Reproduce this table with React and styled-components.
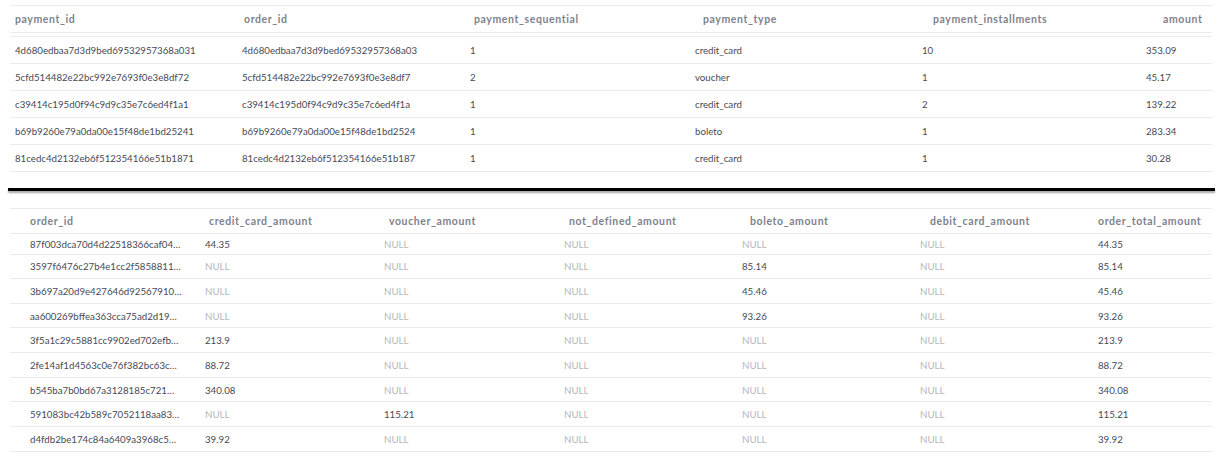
import styled, { createGlobalStyle } from 'styled-components';

const GlobalStyle = createGlobalStyle`
  *, *::before, *::after {
    box-sizing: border-box;
  }
  body {
    margin: 0;
    background: #ffffff;
    font-family: Lato, "Open Sans", sans-serif;
  }
`;

const payments = [
  ['4d680edbaa7d3d9bed69532957368a031', '4d680edbaa7d3d9bed69532957368a03', '1', 'credit_card', '10', '353.09'],
  ['5cfd514482e22bc992e7693f0e3e8df72', '5cfd514482e22bc992e7693f0e3e8df7', '2', 'voucher', '1', '45.17'],
  ['c39414c195d0f94c9d9c35e7c6ed4f1a1', 'c39414c195d0f94c9d9c35e7c6ed4f1a', '1', 'credit_card', '2', '139.22'],
  ['b69b9260e79a0da00e15f48de1bd25241', 'b69b9260e79a0da00e15f48de1bd2524', '1', 'boleto', '1', '283.34'],
  ['81cedc4d2132eb6f512354166e51b1871', '81cedc4d2132eb6f512354166e51b187', '1', 'credit_card', '1', '30.28']
];

const paymentHeaders = [
  ['payment_id', 0],
  ['order_id', 2],
  ['payment_sequential', 4],
  ['payment_type', 8],
  ['payment_installments', 11],
  ['amount', 17]
];

const totalsHeaders = [
  ['order_id', 0],
  ['credit_card_amount', 4],
  ['voucher_amount', 5],
  ['not_defined_amount', 5],
  ['boleto_amount', 8],
  ['debit_card_amount', 10],
  ['order_total_amount', 0]
];

const N = null;
const totals = [
  ['87f003dca70d4d22518366caf04…', '44.35', N, N, N, N, '44.35'],
  ['3597f6476c27b4e1cc2f5858811…', N, N, N, '85.14', N, '85.14'],
  ['3b697a20d9e427646d92567910…', N, N, N, '45.46', N, '45.46'],
  ['aa600269bffea363cca75ad2d19…', N, N, N, '93.26', N, '93.26'],
  ['3f5a1c29c5881cc9902ed702efb…', '213.9', N, N, N, N, '213.9'],
  ['2fe14af1d4563c0e76f382bc63c…', '88.72', N, N, N, N, '88.72'],
  ['b545ba7b0bd67a3128185c721…', '340.08', N, N, N, N, '340.08'],
  ['591083bc42b589c7052118aa83…', N, '115.21', N, N, N, '115.21'],
  ['d4fdb2be174c84a6409a3968c5…', '39.92', N, N, N, N, '39.92']
];

const TOP_COLS = '227px 228px 225px 227px 224px 1fr';
const BOTTOM_COLS = '175px 179px 180px 178px 178px 178px 1fr';

export default function App() {
  return (
    <>
      <GlobalStyle />
      <Page>
        <Table>
          <HeaderRow $cols={TOP_COLS} $height={27}>
            {paymentHeaders.map(([name, shift]) => (
              <HeadCell key={name} $shift={shift}>{name}</HeadCell>
            ))}
          </HeaderRow>
          <Body $double>
            {payments.map((row) => (
              <Row key={row[0]} $cols={TOP_COLS} $height={27}>
                {row.map((value, i) => (
                  <Cell key={i}>{value}</Cell>
                ))}
              </Row>
            ))}
          </Body>
        </Table>

        <Divider />

        <Table>
          <HeaderRow $cols={BOTTOM_COLS} $height={25} $indent={15}>
            {totalsHeaders.map(([name, shift], i) => (
              <HeadCell key={i} $shift={shift}>{name}</HeadCell>
            ))}
          </HeaderRow>
          <Body $shortFirst>
            {totals.map((row) => (
              <Row key={row[0]} $cols={BOTTOM_COLS} $height={24.67} $indent={15}>
                {row.map((value, i) =>
                  value === null ? <NullCell key={i}>NULL</NullCell> : <Cell key={i}>{value}</Cell>
                )}
              </Row>
            ))}
          </Body>
        </Table>
      </Page>
    </>
  );
}

const Page = styled.div`
  padding: 5px 14px 0 10px;
`;

const Table = styled.div`
  border-top: 1px solid #e8eaef;
`;

const HeaderRow = styled.div`
  display: grid;
  grid-template-columns: ${({ $cols }) => $cols};
  align-items: center;
  height: ${({ $height }) => $height}px;
  padding-left: ${({ $indent }) => $indent || 0}px;
  border-bottom: 1px solid #e8eaef;
`;

const Body = styled.div`
  margin-top: ${({ $double }) => ($double ? 3 : 0)}px;
  border-top: ${({ $double }) => ($double ? '1px solid #e8eaef' : 'none')};

  & > div:first-child {
    ${({ $shortFirst }) => $shortFirst && 'height: 20.5px;'}
  }
`;

const Row = styled.div`
  display: grid;
  grid-template-columns: ${({ $cols }) => $cols};
  align-items: center;
  height: ${({ $height }) => $height}px;
  padding-left: ${({ $indent }) => $indent || 0}px;
  border-bottom: 1px solid #e8eaef;
`;

const HeadCell = styled.div`
  padding-left: ${({ $shift }) => 5 + $shift}px;
  font-size: 10.5px;
  font-weight: 700;
  letter-spacing: 0.6px;
  color: #7e828e;
  white-space: nowrap;
`;

const Cell = styled.div`
  padding-left: 5px;
  font-size: 9.7px;
  color: #464955;
  white-space: nowrap;
`;

const NullCell = styled(Cell)`
  color: #b3b6bd;
`;

const Divider = styled.div`
  height: 3px;
  margin: 16px -3px 17px -2px;
  background: #000000;
  box-shadow: 0 2px 2px rgba(0, 0, 0, 0.35);
`;
